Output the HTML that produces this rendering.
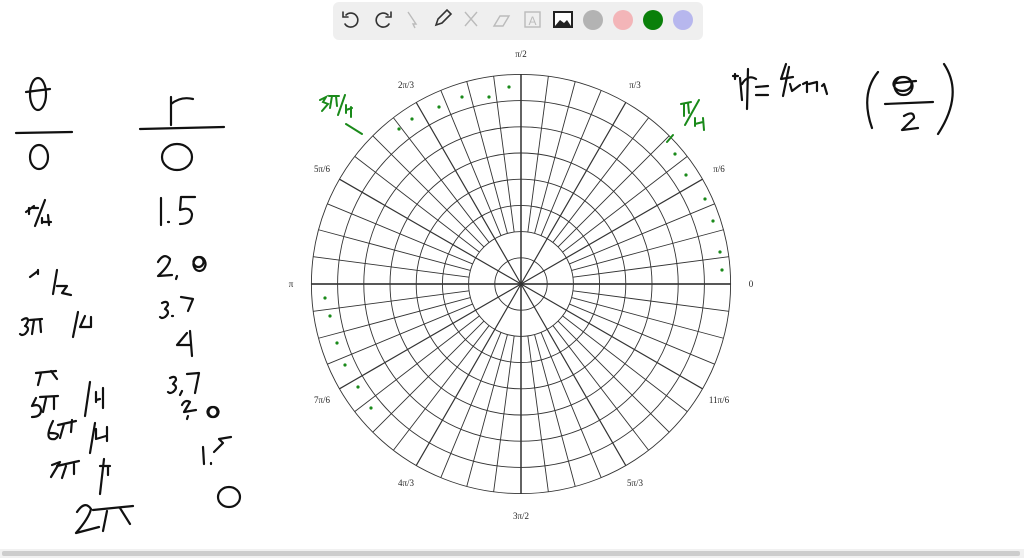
<!DOCTYPE html>
<html><head><meta charset="utf-8"><style>
html,body{margin:0;padding:0;background:#fff;width:1024px;height:558px;overflow:hidden}
svg{position:absolute;left:0;top:0}
.lab{font-family:"Liberation Serif",serif;font-size:9px;fill:#222;text-anchor:middle}
</style></head><body>
<svg id="s" width="1024" height="558" viewBox="0 0 1024 558">
<rect x="333" y="2" width="370" height="38" rx="6" fill="#efefef"/>
<g fill="none" stroke="#333" stroke-width="1.6" stroke-linecap="round">
<path d="M346 15 a7 7 0 1 1 -1 9"/><path d="M343 12 v5 h5"/>
<path d="M388 15 a7 7 0 1 0 1 9"/><path d="M391 12 v5 h-5"/>
<path d="M436 25 l2-6 9-9 4 4-9 9z"/>
</g>
<g fill="none" stroke="#bbb" stroke-width="1.4">
<path d="M408 12 l8 12 -3 0 2 4"/>
<path d="M465 12 l12 14 M477 12 l-12 14"/>
<path d="M494 26 l6-10 h9 l-6 10z"/>
<rect x="525" y="12" width="15" height="15"/>
</g>
<text x="532.5" y="25" font-size="12" text-anchor="middle" fill="#bbb" font-family="Liberation Sans">A</text>
<rect x="553" y="11" width="20" height="17" fill="#222"/><rect x="555" y="13" width="16" height="13" fill="#fff"/>
<path d="M555 26 l5-6 4 3 3-3 4 6z" fill="#222"/>
<circle cx="593" cy="20" r="10" fill="#b3b3b3"/>
<circle cx="623" cy="20" r="10" fill="#f3b5b8"/>
<circle cx="653" cy="20" r="10" fill="#0a800a"/>
<circle cx="683" cy="20" r="10" fill="#b7b7ee"/>
<g id="grid" stroke="#333" stroke-width="0.9" fill="none"></g>
<g class="lab">
<text x="521" y="57">π/2</text><text x="406" y="88">2π/3</text><text x="635" y="88">π/3</text>
<text x="322" y="172">5π/6</text><text x="719" y="172">π/6</text>
<text x="291" y="287">π</text><text x="751" y="287">0</text>
<text x="322" y="403">7π/6</text><text x="719" y="403">11π/6</text>
<text x="406" y="486">4π/3</text><text x="635" y="486">5π/3</text><text x="521" y="519">3π/2</text>
</g>
<g fill="#1a8a1a" id="dots"></g>
<g fill="none" stroke="#1a8a1a" stroke-width="2" stroke-linecap="round">
<path d="M320 100 l6-3 -3 5 5 2 -6 7 M329 96 l10 0 M332 96 l-2 12 M336 96 l1 10 M345 95 l-7 20 M346 105 l0 8 M346 110 l6-2 M351 107 l0 10 M346 124 l16 10"/>
<path d="M681 104 l10-2 M684 104 l0 12 M688 103 l1 10 M699 100 l-14 25 M695 118 l0 8 M695 124 l8-2 M703 118 l1 12 M673 135 l-6 7"/>
</g>
<g fill="none" stroke="#111" stroke-width="2.2" stroke-linecap="round" stroke-linejoin="round">
<path d="M30 94 a8 16 0 1 0 16 0 a8 16 0 1 0 -16 0 M26 92 l24 -3"/>
<path d="M16 133 l56 -1"/>
<path d="M171 125 l0 -28 M171 104 q10 -8 22 -5"/>
<path d="M140 129 l84 -2"/>
<path d="M30 157 a9 12 0 1 0 18 0 a9 12 0 1 0 -18 0"/>
<path d="M162 157 a15 13 0 1 0 30 0 a15 13 0 1 0 -30 0"/>
<path d="M26 212 l8 -6 M29 208 l0 6 M33 208 l5 0 M45 200 l-10 26 M42 218 l0 5 M42 222 l9 0 M48 215 l1 10"/>
<path d="M161 198 l0 27 M168 222 l1 0 M195 197 l-14 0 -1 13 q10 -4 12 4 q0 10 -12 10"/>
<path d="M30 277 l8 -6 M38 270 l0 4 M57 270 l-4 24 M57 286 l10 0 -5 7 l9 2"/>
<path d="M158 262 q6 -10 12 -3 q0 6 -12 17 l14 -1 M177 276 l-1 3 M198 257 a5 5 0 1 0 1 0 a6 7 0 1 0 1 0"/>
<path d="M22 320 q6 -4 6 1 q-2 5 -3 5 q6 2 0 8 q-3 2 -5 0 M30 320 l12 -1 M34 320 l-2 14 M40 320 l1 12 M78 312 l-5 25 M85 316 l-5 11 l10 0 M91 317 l0 10"/>
<path d="M162 303 q6 -3 6 2 l-3 4 q6 3 0 8 q-3 2 -5 0 M172 316 l1 0 M181 297 l12 2 -5 12"/>
<path d="M187 333 l-10 12 l13 0 M190 331 l2 25"/>
<path d="M36 373 l20 -2 M41 373 l-3 12 M51 371 l6 8"/>
<path d="M170 378 q6 -3 6 2 l-3 4 q6 3 0 8 q-3 2 -5 0 M182 391 l-2 4 M187 374 l12 -1 -4 20"/>
<path d="M36 398 l-4 8 q8 -3 9 4 q0 7 -9 7 M40 397 l18 -1 M46 398 l-3 14 M54 397 l0 12 M90 382 l-5 34 M96 392 l0 10 M96 400 l4 -1 M103 388 l0 20"/>
<path d="M182 405 q3 -6 8 -3 l-6 10 l12 -2 M188 416 l-1 3 M212 407 a5 5 0 1 0 1 0 a5 5 0 1 0 1 0"/>
<path d="M53 421 q-10 20 2 18 q8 -6 -5 -6 M58 425 l18 -4 M64 424 l-4 14 M72 420 l-1 12 M95 423 l-5 30 M96 429 l0 10 l10 -3 M107 427 l0 14"/>
<path d="M203 447 l1 17 M211 463 l0 1 M231 437 l-12 2 4 4 l-9 9"/>
<path d="M52 465 l8 -3 -9 15 M57 466 l22 -5 M66 466 l-4 12 M74 464 l0 10 M104 459 l-4 35 M100 466 l10 0 M108 466 l0 9"/>
<path d="M218 497 a11 10 0 1 0 22 0 a11 10 0 1 0 -22 0"/>
<path d="M77 512 q8 -12 14 -3 q-2 9 -15 24 l23 -6 M93 510 l40 -4 M107 511 l-4 20 M120 508 l10 16"/>
<path d="M733 76 l5 0 M735 74 l0 5 M740 78 l2 22 M742 84 q6 -10 14 -5 M748 69 l-1 40 M756 87 l12 -1 M756 95 l12 0"/>
<path d="M786 64 l-5 15 l12 -2 M789 67 l-6 29 M790 84 l2 7 l8 -6 M803 84 l4 -2 l0 10 M809 84 l8 -2 0 9 M822 86 l2 -2 l3 10"/>
<path d="M878 72 q-18 22 -6 56 M944 64 q20 30 -6 70"/>
<path d="M902 77 a9 7 0 1 0 1 0 a9 9 0 1 0 1 0 M896 83 l20 -2 M885 104 l48 -2 M904 116 q10 -6 10 2 l-12 12 l16 -2"/>
</g>
<rect x="0" y="549" width="1024" height="9" fill="#f1f1f1"/>
<rect x="2" y="551" width="1018" height="5" rx="2" fill="#cdcdcd"/>
</svg>
<script>
var g=document.getElementById('grid'),cx=521,cy=284,h='';
for(var i=1;i<=8;i++){h+='<circle cx="'+cx+'" cy="'+cy+'" r="'+(i*26.2)+'"/>';}
function sp(a,r0,r1,w){var c=Math.cos(a*Math.PI/180),s=Math.sin(a*Math.PI/180);h+='<line x1="'+(cx+r0*c)+'" y1="'+(cy-r0*s)+'" x2="'+(cx+r1*c)+'" y2="'+(cy-r1*s)+'"'+(w?' stroke-width="'+w+'"':'')+'/>';}
for(var a=0;a<360;a+=7.5){
 if(a%30==0)sp(a,0,209.6,1.2);else sp(a,52.4,209.6);}
h+='<line x1="'+(cx-209.6)+'" y1="'+cy+'" x2="'+(cx+209.6)+'" y2="'+cy+'" stroke-width="1.4"/>';
h+='<line x1="'+cx+'" y1="'+(cy-209.6)+'" x2="'+cx+'" y2="'+(cy+209.6)+'" stroke-width="1.4"/>';
g.innerHTML=h;
var d=[[509,87],[489,97],[462,97],[439,107],[412,119],[399,129],[675,154],[686,175],[705,199],[713,221],[720,252],[722,270],[325,298],[330,316],[337,343],[345,365],[358,387],[371,408]],o='';
d.forEach(function(p){o+='<circle cx="'+p[0]+'" cy="'+p[1]+'" r="1.6"/>';});
document.getElementById('dots').innerHTML=o;
</script>
</body></html>
